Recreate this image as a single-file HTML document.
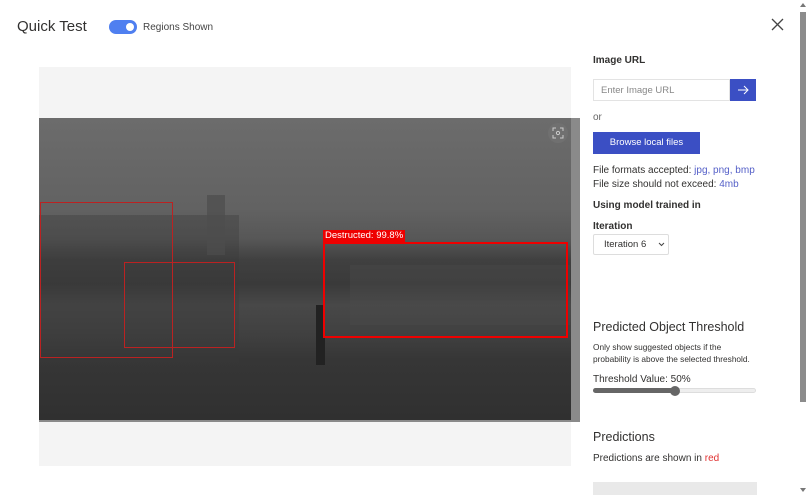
<!DOCTYPE html>
<html><head><meta charset="utf-8"><style>
*{margin:0;padding:0;box-sizing:border-box}
body{width:806px;height:495px;overflow:hidden;background:#fff;font-family:"Liberation Sans",sans-serif;color:#323130;position:relative}
.a{position:absolute}
.t{font-size:10px;white-space:nowrap}
</style></head><body>
<div class="a" style="left:17px;top:18px;font-size:15px;color:#323130">Quick Test</div>
<div class="a" style="left:109px;top:20px;width:28px;height:14px;border-radius:7px;background:#4f7ff0"></div>
<div class="a" style="left:126px;top:23px;width:8px;height:8px;border-radius:50%;background:#fff"></div>
<div class="a t" style="left:143px;top:22px;color:#444">Regions Shown</div>
<svg class="a" style="left:771px;top:18px" width="13" height="13"><path d="M1 1L12 12M12 1L1 12" stroke="#444" stroke-width="1.3"/></svg>
<div class="a" style="left:800px;top:12px;width:6px;height:390px;background:#8c8c8c"></div>
<div class="a" style="left:800px;top:3px;width:0;height:0;border:3px solid transparent;border-bottom:4px solid #777;border-top:0"></div>
<div class="a" style="left:800px;top:488px;width:0;height:0;border:3px solid transparent;border-top:4px solid #777;border-bottom:0"></div>

<div class="a" style="left:39px;top:67px;width:532px;height:399px;background:#f4f4f4"></div>
<div class="a" style="left:39px;top:118px;width:541px;height:304px;background:#8a8a8a"></div>
<div class="a" style="left:39px;top:118px;width:532px;height:302px;background:linear-gradient(180deg,#6c6c6c 0%,#626262 30%,#575757 40%,#404040 47%,#3a3a3a 55%,#484848 62%,#404040 72%,#363636 80%,#303030 100%)"></div>
<div class="a" style="left:39px;top:215px;width:200px;height:150px;background:#3a3a3a;opacity:.35"></div>
<div class="a" style="left:350px;top:265px;width:220px;height:60px;background:#4a4a4a;opacity:.4"></div>
<div class="a" style="left:207px;top:195px;width:18px;height:60px;background:#4d4d4d;opacity:.7"></div>
<div class="a" style="left:316px;top:305px;width:9px;height:60px;background:#222"></div>
<div class="a" style="left:548px;top:123px;width:20px;height:20px;border-radius:50%;background:#707070"></div>
<svg class="a" style="left:552px;top:127px" width="12" height="12"><path d="M1 4V1H4M8 1H11V4M11 8V11H8M4 11H1V8" stroke="#ccc" fill="none"/><circle cx="6" cy="6" r="1.6" stroke="#ccc" fill="none"/></svg>

<div class="a" style="left:40px;top:202px;width:133px;height:156px;border:1px solid #b22"></div>
<div class="a" style="left:124px;top:262px;width:111px;height:86px;border:1px solid #b22"></div>
<div class="a" style="left:323px;top:242px;width:245px;height:96px;border:2px solid #e00"></div>
<div class="a t" style="left:323px;top:230px;height:12px;padding:0 2px;background:#e00;color:#fff;font-size:9.5px;line-height:12px">Destructed: 99.8%</div>

<div class="a" style="left:593px;top:55px;font-size:10px;font-weight:bold">Image URL</div>
<div class="a" style="left:593px;top:79px;width:137px;height:22px;border:1px solid #e3e3e3"></div>
<div class="a t" style="left:601px;top:85px;color:#888;font-size:9.5px">Enter Image URL</div>
<div class="a" style="left:730px;top:79px;width:26px;height:22px;background:#3b4fc4"></div>
<svg class="a" style="left:737px;top:85px" width="12" height="10"><path d="M1 5H11M7 1L11 5L7 9" stroke="#fff" fill="none"/></svg>
<div class="a t" style="left:593px;top:112px;color:#666">or</div>
<div class="a" style="left:593px;top:132px;width:107px;height:22px;background:#3b4fc4;color:#fff;font-size:9.5px;text-align:center;line-height:22px">Browse local files</div>
<div class="a t" style="left:593px;top:165px">File formats accepted: <span style="color:#5560c8">jpg, png, bmp</span></div>
<div class="a t" style="left:593px;top:179px">File size should not exceed: <span style="color:#5560c8">4mb</span></div>
<div class="a t" style="left:593px;top:200px;font-weight:bold">Using model trained in</div>
<div class="a t" style="left:593px;top:221px;font-weight:bold">Iteration</div>
<div class="a" style="left:593px;top:234px;width:76px;height:21px;border:1px solid #ddd;border-radius:2px"></div>
<div class="a t" style="left:604px;top:239px;font-size:9.5px">Iteration 6</div>
<svg class="a" style="left:658px;top:242px" width="7" height="5"><path d="M1 1L3.5 3.5L6 1" stroke="#444" fill="none"/></svg>

<div class="a" style="left:593px;top:320px;font-size:12.5px">Predicted Object Threshold</div>
<div class="a t" style="left:593px;top:342px;font-size:8.3px">Only show suggested objects if the</div>
<div class="a t" style="left:593px;top:354px;font-size:8.3px">probability is above the selected threshold.</div>
<div class="a t" style="left:593px;top:374px">Threshold Value: 50%</div>
<div class="a" style="left:593px;top:388px;width:163px;height:5px;border-radius:3px;background:#eee;border:1px solid #ddd"></div>
<div class="a" style="left:593px;top:388px;width:82px;height:5px;border-radius:3px;background:#666"></div>
<div class="a" style="left:670px;top:386px;width:10px;height:10px;border-radius:50%;background:#666"></div>
<div class="a" style="left:593px;top:430px;font-size:12.5px">Predictions</div>
<div class="a t" style="left:593px;top:453px">Predictions are shown in <span style="color:#e03030">red</span></div>
<div class="a" style="left:593px;top:482px;width:164px;height:13px;background:#e9e9e9"></div>
</body></html>
